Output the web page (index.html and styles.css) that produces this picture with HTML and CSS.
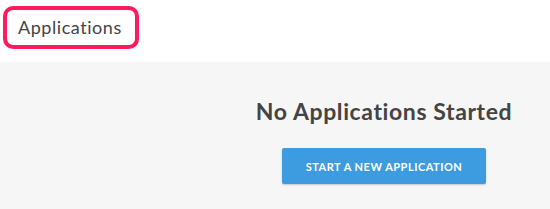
FILE: index.html
```html
<!doctype html>
<html>
<head>
<meta charset="UTF-8">
<title>Applications</title>
<link rel="stylesheet" href="styles.css">
</head>
<body>
<div class="header">
	<h1 class="page_title">Applications</h1>
</div>
<div class="content">
	<div class="empty">
		<h2 class="empty_title">No Applications Started</h2>
		<button type="button" class="btn_start">Start a new application</button>
	</div>
</div>
</body>
</html>
```
FILE: styles.css
```css
html, body {
	margin: 0;
	padding: 0;
}
body {
	font-family: Lato, "Liberation Sans", sans-serif;
	font-variant-ligatures: none;
	color: #444;
	background: #f6f6f6;
	height: 209px;
	overflow: hidden;
}
.header {
	background: #fff;
	height: 62px;
	padding: 6px 0 0 3px;
	box-sizing: border-box;
}
.page_title {
	display: inline-block;
	margin: 0;
	box-sizing: border-box;
	width: 136px;
	height: 43px;
	padding: 0 0 0 11px;
	border: 4.5px solid #ff1a5e;
	border-radius: 10px;
	font-size: 18px;
	font-weight: normal;
	letter-spacing: 0.55px;
	line-height: 34px;
	color: #444;
}
.content {
	padding-left: 218px;
}
.empty {
	text-align: center;
	padding-top: 34px;
}
.empty_title {
	margin: 0;
	font-size: 23px;
	font-weight: bold;
	letter-spacing: 0.6px;
	line-height: 30px;
	color: #444;
}
.btn_start {
	margin-top: 22px;
	width: 204px;
	height: 36px;
	border: 0;
	border-radius: 2px;
	background: #3d9be0;
	box-shadow: 0 1px 2px rgba(0,0,0,0.2);
	color: #fff;
	font-family: inherit;
	font-size: 11px;
	font-weight: bold;
	letter-spacing: 0.5px;
	text-transform: uppercase;
}
```
